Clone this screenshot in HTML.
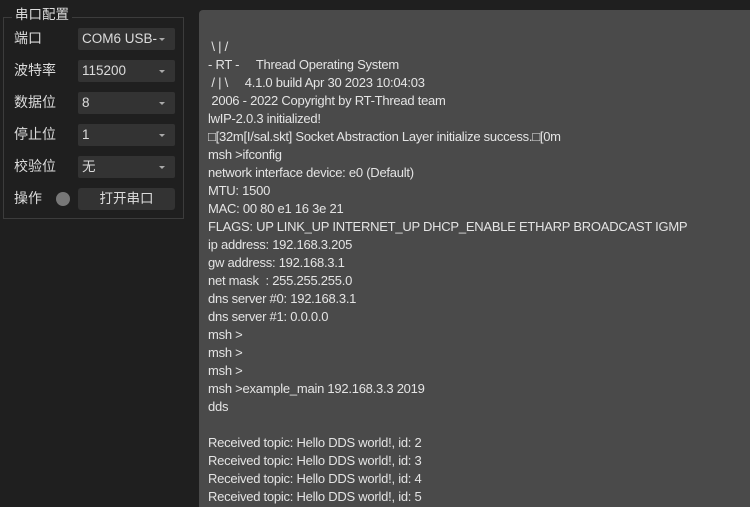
<!DOCTYPE html>
<html><head><meta charset="utf-8"><style>
html,body{margin:0;padding:0;width:750px;height:507px;overflow:hidden;background:#1f1f1f;font-family:"Liberation Sans","Noto Sans CJK SC",sans-serif;color:#dcdcdc;position:relative}
.grp{position:absolute;left:3px;top:17px;width:181px;height:202px;border:1px solid #3c3c3c;box-sizing:border-box}
.title{position:absolute;left:12px;top:7px;background:#1f1f1f;padding:0 3px;font-size:13.5px;line-height:16px}
.lbl{position:absolute;left:14px;font-size:14px;line-height:21px}
.cb{position:absolute;left:78px;width:97px;height:22px;background:#333;border-radius:2px;font-size:13.5px;line-height:22px;padding-left:4px;box-sizing:border-box}
.cb:after{content:"";position:absolute;right:10px;top:10px;border-left:3px solid transparent;border-right:3px solid transparent;border-top:3px solid #aaa}
.btn{position:absolute;left:78px;top:188px;width:97px;height:22px;background:#333;border-radius:3px;font-size:13.5px;line-height:22px;text-align:center}
.dot{position:absolute;left:56px;top:192px;width:14px;height:14px;border-radius:50%;background:#777}
.term{position:absolute;left:199px;top:10px;width:551px;height:497px;background:#4a4a4a;border-radius:4px 0 0 0;overflow:hidden}
pre{position:absolute;left:9px;top:28px;margin:0;font-family:"Liberation Sans",sans-serif;font-size:13px;letter-spacing:-0.25px;line-height:18px;color:#e4e4e4;white-space:pre}
</style></head><body>
<div class="grp"></div>
<div class="title">串口配置</div>
<div class="lbl" style="top:28px">端口</div><div class="cb" style="top:28px">COM6 USB-</div>
<div class="lbl" style="top:60px">波特率</div><div class="cb" style="top:60px">115200</div>
<div class="lbl" style="top:92px">数据位</div><div class="cb" style="top:92px">8</div>
<div class="lbl" style="top:124px">停止位</div><div class="cb" style="top:124px">1</div>
<div class="lbl" style="top:156px">校验位</div><div class="cb" style="top:156px">无</div>
<div class="lbl" style="top:188px">操作</div><div class="dot"></div><div class="btn">打开串口</div>
<div class="term"><pre> \ | /
- RT -     Thread Operating System
 / | \     4.1.0 build Apr 30 2023 10:04:03
 2006 - 2022 Copyright by RT-Thread team
lwIP-2.0.3 initialized!
&#9633;[32m[I/sal.skt] Socket Abstraction Layer initialize success.&#9633;[0m
msh &gt;ifconfig
network interface device: e0 (Default)
MTU: 1500
MAC: 00 80 e1 16 3e 21
FLAGS: UP LINK_UP INTERNET_UP DHCP_ENABLE ETHARP BROADCAST IGMP
ip address: 192.168.3.205
gw address: 192.168.3.1
net mask  : 255.255.255.0
dns server #0: 192.168.3.1
dns server #1: 0.0.0.0
msh &gt;
msh &gt;
msh &gt;
msh &gt;example_main 192.168.3.3 2019
dds

Received topic: Hello DDS world!, id: 2
Received topic: Hello DDS world!, id: 3
Received topic: Hello DDS world!, id: 4
Received topic: Hello DDS world!, id: 5</pre></div>
</body></html>
